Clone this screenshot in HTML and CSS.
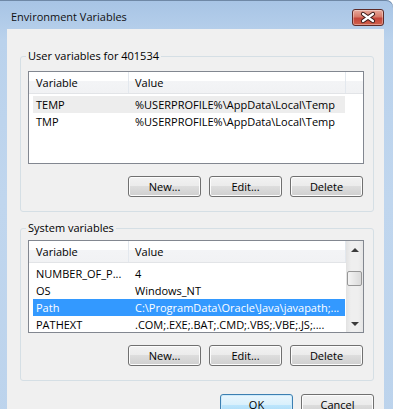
FILE: index.html
```html
<!DOCTYPE html>
<html lang="en">
<head>
  <meta charset="UTF-8" />
  <title>Environment Variables</title>
  <link rel="stylesheet" href="styles.css">
</head>
<body>
  <div class="window">
    <!-- Title bar -->
    <div class="titlebar">
      <span class="title">Environment Variables</span>
      <button class="close" aria-label="Close">
        <svg width="32" height="17" viewBox="0 0 32 17">
          <path d="M11 5 L21 12 M21 5 L11 12" stroke="#3b1a18" stroke-width="4.2" stroke-linecap="round" fill="none"/>
          <path d="M11 5 L21 12 M21 5 L11 12" stroke="#ffffff" stroke-width="2.2" stroke-linecap="round" fill="none"/>
        </svg>
      </button>
    </div>

    <div class="client">
      <!-- User variables -->
      <div class="group">
        <div class="group-title">User variables for 401534</div>
        <div class="listview">
          <div class="lv-main">
            <div class="lv-header">
              <span class="hcell var">Variable</span>
              <span class="hcell val">Value</span>
              <span class="hcell fill"></span>
            </div>
            <div class="lv-rows">
              <div class="row inactive"><span class="cell-var">TEMP</span><span class="cell-val">%USERPROFILE%\AppData\Local\Temp</span></div>
              <div class="row"><span class="cell-var">TMP</span><span class="cell-val">%USERPROFILE%\AppData\Local\Temp</span></div>
            </div>
          </div>
        </div>
        <div class="buttons">
          <button class="btn">New...</button>
          <button class="btn">Edit...</button>
          <button class="btn">Delete</button>
        </div>
      </div>

      <!-- System variables -->
      <div class="group system">
        <div class="group-title">System variables</div>
        <div class="listview">
          <div class="lv-main">
            <div class="lv-header">
              <span class="hcell var">Variable</span>
              <span class="hcell val">Value</span>
            </div>
            <div class="lv-rows">
              <div class="row"><span class="cell-var">NUMBER_OF_P...</span><span class="cell-val">4</span></div>
              <div class="row"><span class="cell-var">OS</span><span class="cell-val">Windows_NT</span></div>
              <div class="row selected"><span class="cell-var">Path</span><span class="cell-val">C:\ProgramData\Oracle\Java\javapath;...</span></div>
              <div class="row"><span class="cell-var">PATHEXT</span><span class="cell-val">.COM;.EXE;.BAT;.CMD;.VBS;.VBE;.JS;....</span></div>
            </div>
          </div>
          <div class="scrollbar">
            <div class="sb-btn"><span class="arrow-up"></span></div>
            <div class="sb-track"><div class="sb-thumb"></div></div>
            <div class="sb-btn"><span class="arrow-down"></span></div>
          </div>
        </div>
        <div class="buttons">
          <button class="btn">New...</button>
          <button class="btn">Edit...</button>
          <button class="btn">Delete</button>
        </div>
      </div>

      <!-- Dialog buttons -->
      <div class="dialog-buttons">
        <button class="btn default">OK</button>
        <button class="btn">Cancel</button>
      </div>
    </div>
  </div>
</body>
</html>
```

FILE: styles.css
```css
/* Basic Reset */
* {
  margin: 0;
  padding: 0;
  box-sizing: border-box;
}

html,
body {
  height: 409px;
  overflow: hidden;
}

body {
  font-family: "Open Sans", "Noto Sans", sans-serif;
  font-size: 11px;
  color: #000;
  background-color: #ffffff;
}

/* Window frame */
.window {
  width: 393px;
  height: 440px;
  padding: 0 9px 0 7px;
  border-top-right-radius: 7px;
  background: linear-gradient(#a7c4e5, #bad2ec 40px, #c0d6ee 200px, #bcd3ec);
  box-shadow: inset 0 1px 0 #6f88a6;
}

.titlebar {
  display: flex;
  justify-content: space-between;
  align-items: flex-start;
  height: 29px;
  padding: 9px 0 0 4px;
}

.title {
  line-height: 16px;
  color: #111;
}

.close {
  width: 32px;
  height: 17px;
  border: 1px solid #5e2b28;
  border-radius: 3px;
  background: linear-gradient(#e8aa9c, #d77a69 45%, #c4453a 55%, #d0614b);
  box-shadow: inset 0 0 0 1px rgba(255, 255, 255, 0.35);
  display: flex;
}

.close svg {
  margin: -1px;
}

/* Client area */
.client {
  height: 420px;
  padding-top: 27px;
  background-color: #f0f0f0;
}

/* Group boxes */
.group {
  margin: 0 10px 0 13px;
  padding: 0 9px 14px 7px;
  border: 1px solid #d5dfe5;
  border-radius: 3px;
}

.group + .group {
  margin-top: 16px;
}

.group-title {
  display: table;
  margin: -9px 0 0 -2px;
  padding: 0 2px;
  line-height: 16px;
  background-color: #f0f0f0;
}

/* List views */
.listview {
  display: flex;
  height: 93px;
  margin-top: 7px;
  border: 1px solid #828790;
  background-color: #fff;
  overflow: hidden;
}

.system .listview {
  margin-top: 4px;
}

.lv-main {
  flex: 1;
}

.lv-header {
  display: flex;
  height: 22px;
  border-bottom: 1px solid #e2e4e7;
  background: linear-gradient(#ffffff 45%, #f3f4f6 45%, #f1f2f4);
}

.hcell {
  line-height: 21px;
  padding-left: 7px;
  border-right: 1px solid #e3e8ee;
}

.hcell.var {
  width: 100px;
}

.hcell.val {
  width: 217px;
  padding-left: 6px;
}

.hcell.fill {
  flex: 1;
  border-right: 0;
}

.lv-rows {
  padding-top: 2px;
}

.row {
  display: flex;
  width: 312px;
  height: 17px;
  margin-left: 4px;
  line-height: 17px;
  white-space: nowrap;
}

.cell-var {
  width: 98px;
  padding-left: 3px;
  overflow: hidden;
}

.cell-val {
  flex: 1;
  padding-left: 4px;
  overflow: hidden;
}

.row.inactive {
  background-color: #ededed;
}

.row.selected {
  background-color: #3399ff;
  color: #fff;
}

/* Scrollbar */
.scrollbar {
  display: flex;
  flex-direction: column;
  width: 17px;
  background: linear-gradient(to right, #e2e2e2, #efefef 30%, #efefef 70%, #e6e6e6);
}

.sb-btn {
  display: flex;
  justify-content: center;
  align-items: center;
  height: 17px;
}

.arrow-up {
  border-left: 4px solid transparent;
  border-right: 4px solid transparent;
  border-bottom: 4px solid #3c3c3c;
}

.arrow-down {
  border-left: 4px solid transparent;
  border-right: 4px solid transparent;
  border-top: 4px solid #3c3c3c;
}

.sb-track {
  flex: 1;
  padding-top: 13px;
}

.sb-thumb {
  width: 15px;
  height: 15px;
  margin-left: 1px;
  border: 1px solid #979797;
  border-radius: 2px;
  background: linear-gradient(to right, #f4f4f4, #e7e7e7 50%, #dadada);
}

/* Buttons */
.buttons {
  display: flex;
  justify-content: flex-end;
  gap: 8px;
  margin: 12px 1px 0 0;
}

.dialog-buttons {
  display: flex;
  justify-content: flex-end;
  gap: 8px;
  margin: 13px 10px 0 0;
}

.btn {
  width: 73px;
  height: 21px;
  border: 1px solid #707070;
  border-radius: 3px;
  background: linear-gradient(#f2f2f2, #ebebeb 50%, #dddddd 50%, #cfcfcf);
  box-shadow: inset 0 0 0 1px #fcfcfc;
  font: inherit;
  line-height: 19px;
  color: #000;
}

.btn.default {
  border-color: #3c7fb1;
  background: linear-gradient(#eaf6fd, #d9f0fc 50%, #bee6fd 50%, #a7d9f5);
  box-shadow: inset 0 0 0 1px #cdeafb;
}
```
